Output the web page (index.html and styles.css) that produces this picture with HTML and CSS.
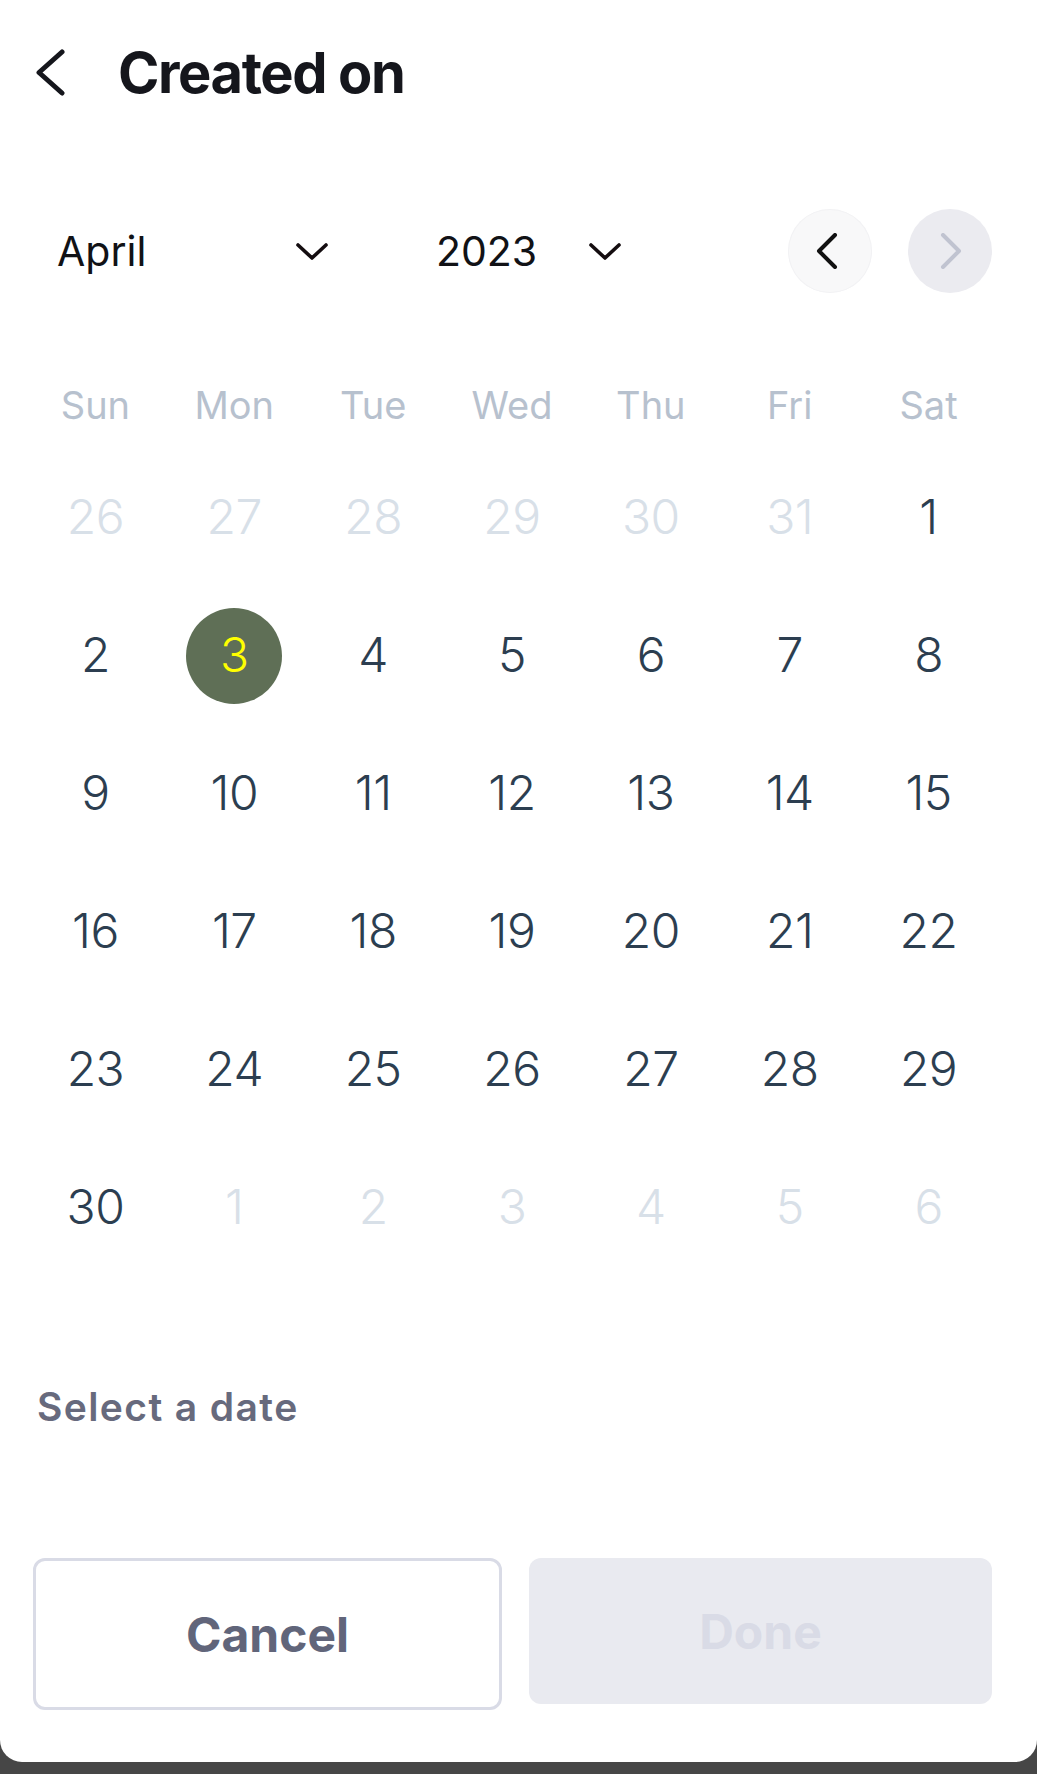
FILE: index.html
```html
<!DOCTYPE html>
<html lang="en">
<head>
<meta charset="utf-8">
<title>Created on</title>
<link rel="stylesheet" href="styles.css">
</head>
<body>
<div class="sheet">
  <header class="header">
    <button class="back" aria-label="Back">
      <svg width="32" height="47" viewBox="0 0 32 47"><polyline points="28,3 5,23.5 28,44" fill="none" stroke="#15161c" stroke-width="5" stroke-linecap="round" stroke-linejoin="round"/></svg>
    </button>
    <h1 class="title">Created on</h1>
  </header>

  <div class="picker-bar">
    <div class="select month">
      <span>April</span>
      <svg width="32" height="18" viewBox="0 0 32 18"><polyline points="2,2 16,15 30,2" fill="none" stroke="#140d10" stroke-width="3.6" stroke-linecap="round" stroke-linejoin="round"/></svg>
    </div>
    <div class="select year">
      <span>2023</span>
      <svg width="32" height="18" viewBox="0 0 32 18"><polyline points="2,2 16,15 30,2" fill="none" stroke="#140d10" stroke-width="3.6" stroke-linecap="round" stroke-linejoin="round"/></svg>
    </div>
    <div class="navs">
      <button class="nav prev" aria-label="Previous month">
        <svg width="22" height="36" viewBox="0 0 22 36"><polyline points="19,2 3,18 19,34" fill="none" stroke="#111" stroke-width="4" stroke-linecap="round" stroke-linejoin="round"/></svg>
      </button>
      <button class="nav next" aria-label="Next month">
        <svg width="22" height="36" viewBox="0 0 22 36"><polyline points="3,2 19,18 3,34" fill="none" stroke="#c0c3d0" stroke-width="4" stroke-linecap="round" stroke-linejoin="round"/></svg>
      </button>
    </div>
  </div>

  <div class="weekdays">
    <span>Sun</span><span>Mon</span><span>Tue</span><span>Wed</span><span>Thu</span><span>Fri</span><span>Sat</span>
  </div>

  <div class="days">
    <span class="day muted">26</span><span class="day muted">27</span><span class="day muted">28</span><span class="day muted">29</span><span class="day muted">30</span><span class="day muted">31</span><span class="day">1</span>
    <span class="day">2</span><span class="day selected"><b>3</b></span><span class="day">4</span><span class="day">5</span><span class="day">6</span><span class="day">7</span><span class="day">8</span>
    <span class="day">9</span><span class="day">10</span><span class="day">11</span><span class="day">12</span><span class="day">13</span><span class="day">14</span><span class="day">15</span>
    <span class="day">16</span><span class="day">17</span><span class="day">18</span><span class="day">19</span><span class="day">20</span><span class="day">21</span><span class="day">22</span>
    <span class="day">23</span><span class="day">24</span><span class="day">25</span><span class="day">26</span><span class="day">27</span><span class="day">28</span><span class="day">29</span>
    <span class="day">30</span><span class="day muted">1</span><span class="day muted">2</span><span class="day muted">3</span><span class="day muted">4</span><span class="day muted">5</span><span class="day muted">6</span>
  </div>

  <p class="hint">Select a date</p>

  <div class="actions">
    <button class="btn cancel">Cancel</button>
    <button class="btn done" disabled>Done</button>
  </div>
</div>
</body>
</html>
```

FILE: styles.css
```css
* { box-sizing: border-box; }

html, body {
  margin: 0;
  padding: 0;
  background: #464646;
}

body {
  font-family: Inter, "Noto Sans", "Liberation Sans", sans-serif;
  height: 1774px;
  overflow: hidden;
}

.sheet {
  background: #ffffff;
  height: 1762px;
  border-radius: 0 0 22px 22px;
  display: flex;
  flex-direction: column;
}

button {
  font-family: inherit;
  border: 0;
  background: none;
  padding: 0;
  margin: 0;
}

/* header */
.header {
  height: 144px;
  display: flex;
  align-items: center;
  padding-left: 34px;
}

.back {
  width: 32px;
  height: 47px;
  display: flex;
}

.title {
  margin: 0 0 0 52px;
  font-size: 56px;
  font-weight: 700;
  letter-spacing: -1.4px;
  color: #15161c;
  line-height: 1;
  padding-top: 2px;
}

/* month / year bar */
.picker-bar {
  margin-top: 64px;
  height: 85px;
  display: flex;
  align-items: center;
  padding-left: 57px;
  padding-right: 45px;
}

.select {
  display: flex;
  align-items: center;
  justify-content: space-between;
  font-size: 41px;
  font-weight: 400;
  color: #111216;
}

.select svg { margin-top: 2px; }

.month { width: 271px; }

.year {
  width: 185px;
  margin-left: 108px;
}

.navs {
  margin-left: auto;
  display: flex;
  gap: 36px;
}

.nav {
  width: 84px;
  height: 84px;
  border-radius: 50%;
  display: flex;
  align-items: center;
  justify-content: center;
}

.prev {
  background: #f8f8f9;
  box-shadow: inset 0 0 0 1px #f2f2f4;
}
.prev svg { margin-left: -6px; }

.next { background: #ebebf0; }
.next svg { margin-left: 2px; }

/* weekday header */
.weekdays {
  margin-top: 70px;
  margin-left: 26px;
  width: 972px;
  height: 86px;
  display: grid;
  grid-template-columns: repeat(7, 1fr);
  align-items: center;
  justify-items: center;
  font-size: 38px;
  color: #b7c1ce;
  padding-bottom: 2px;
}

/* day grid */
.days {
  margin-left: 26px;
  width: 972px;
  display: grid;
  grid-template-columns: repeat(7, 1fr);
  grid-auto-rows: 138px;
  align-items: center;
  justify-items: center;
}

.day {
  font-size: 48px;
  font-weight: 300;
  color: #2c3e50;
  width: 96px;
  height: 96px;
  display: flex;
  align-items: center;
  justify-content: center;
  letter-spacing: -0.5px;
  padding-bottom: 4px;
}

.day.muted { color: #d8e0e8; }

.day.selected {
  background: #5f6f56;
  border-radius: 50%;
}
.day.selected b {
  font-weight: 300;
  color: #ffff00;
}

/* hint */
.hint {
  margin: 106px 0 0 37px;
  font-size: 39px;
  line-height: 48px;
  font-weight: 600;
  letter-spacing: 1.4px;
  color: #676a7d;
}

/* actions */
.actions {
  margin-top: 127px;
  padding-left: 33px;
  padding-right: 45px;
  display: flex;
  align-items: flex-start;
  gap: 27px;
}

.btn {
  flex: 1;
  font-size: 48px;
  font-weight: 700;
  border-radius: 12px;
}

.cancel {
  height: 152px;
  border: 3px solid #d9dbe6;
  background: #ffffff;
  color: #61657a;
}

.done {
  height: 146px;
  background: #e9eaf0;
  color: #d9dbe6;
}
```
